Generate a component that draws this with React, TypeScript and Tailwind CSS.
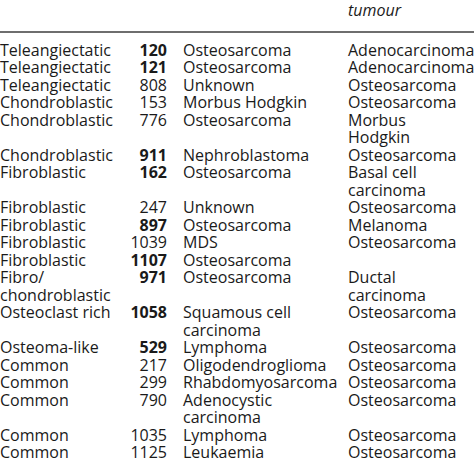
import React from 'react';

type Row = {
    subtype: string[];
    patient: string;
    bold?: boolean;
    first: string[];
    second: string[];
};

const rows: Row[] = [
    { subtype: ['Teleangiectatic'], patient: '120', bold: true, first: ['Osteosarcoma'], second: ['Adenocarcinoma'] },
    { subtype: ['Teleangiectatic'], patient: '121', bold: true, first: ['Osteosarcoma'], second: ['Adenocarcinoma'] },
    { subtype: ['Teleangiectatic'], patient: '808', first: ['Unknown'], second: ['Osteosarcoma'] },
    { subtype: ['Chondroblastic'], patient: '153', first: ['Morbus Hodgkin'], second: ['Osteosarcoma'] },
    { subtype: ['Chondroblastic'], patient: '776', first: ['Osteosarcoma'], second: ['Morbus', 'Hodgkin'] },
    { subtype: ['Chondroblastic'], patient: '911', bold: true, first: ['Nephroblastoma'], second: ['Osteosarcoma'] },
    { subtype: ['Fibroblastic'], patient: '162', bold: true, first: ['Osteosarcoma'], second: ['Basal cell', 'carcinoma'] },
    { subtype: ['Fibroblastic'], patient: '247', first: ['Unknown'], second: ['Osteosarcoma'] },
    { subtype: ['Fibroblastic'], patient: '897', bold: true, first: ['Osteosarcoma'], second: ['Melanoma'] },
    { subtype: ['Fibroblastic'], patient: '1039', first: ['MDS'], second: ['Osteosarcoma'] },
    { subtype: ['Fibroblastic'], patient: '1107', bold: true, first: ['Osteosarcoma'], second: [] },
    { subtype: ['Fibro/', 'chondroblastic'], patient: '971', bold: true, first: ['Osteosarcoma'], second: ['Ductal', 'carcinoma'] },
    { subtype: ['Osteoclast rich'], patient: '1058', bold: true, first: ['Squamous cell', 'carcinoma'], second: ['Osteosarcoma'] },
    { subtype: ['Osteoma-like'], patient: '529', bold: true, first: ['Lymphoma'], second: ['Osteosarcoma'] },
    { subtype: ['Common'], patient: '217', first: ['Oligodendroglioma'], second: ['Osteosarcoma'] },
    { subtype: ['Common'], patient: '299', first: ['Rhabdomyosarcoma'], second: ['Osteosarcoma'] },
    { subtype: ['Common'], patient: '790', first: ['Adenocystic', 'carcinoma'], second: ['Osteosarcoma'] },
    { subtype: ['Common'], patient: '1035', first: ['Lymphoma'], second: ['Osteosarcoma'] },
    { subtype: ['Common'], patient: '1125', first: ['Leukaemia'], second: ['Osteosarcoma'] },
];

const Lines = ({ lines }: { lines: string[] }) => (
    <>
        {lines.map((l, i) => (
            <div key={i}>{l}</div>
        ))}
    </>
);

export default function App() {
    return (
        <div
            className="w-[474px] h-[474px] overflow-hidden bg-white text-[#1a1a1a] text-[16px] leading-[17.5px] whitespace-nowrap"
            style={{ fontFamily: '"Open Sans", "Noto Sans", sans-serif' }}
        >
            <div className="mt-[-21px] pb-[12px] italic">
                <div className="grid grid-cols-[128px_39px_181px_1fr]">
                    <div>Subtype</div>
                    <div></div>
                    <div className="pl-4">Primary</div>
                    <div>Second</div>
                </div>
                <div className="mt-[5px] grid grid-cols-[128px_39px_181px_1fr]">
                    <div></div>
                    <div></div>
                    <div></div>
                    <div>tumour</div>
                </div>
            </div>
            <div className="h-[1.5px] bg-[#6e6e6e]" />
            <div className="pt-[9px] grid grid-cols-[128px_39px_181px_1fr]">
                {rows.map((r, i) => (
                    <React.Fragment key={i}>
                        <div>
                            <Lines lines={r.subtype} />
                        </div>
                        <div className={`text-right ${r.bold ? 'font-bold' : ''}`}>{r.patient}</div>
                        <div className="pl-4">
                            <Lines lines={r.first} />
                        </div>
                        <div>
                            <Lines lines={r.second} />
                        </div>
                    </React.Fragment>
                ))}
            </div>
        </div>
    );
}
